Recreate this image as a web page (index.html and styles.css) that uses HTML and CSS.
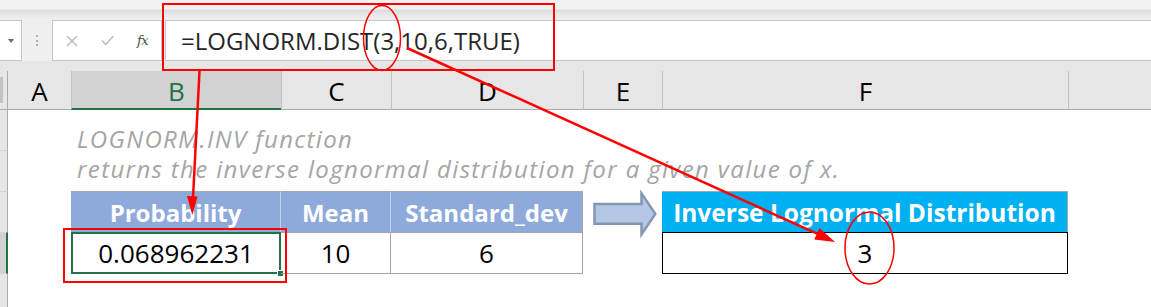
FILE: index.html
```html
<!DOCTYPE html>
<html>
<head>
<meta charset="utf-8">
<title>LOGNORM.DIST</title>
<link rel="stylesheet" href="styles.css">
</head>
<body>
<div class="app">
  <div class="topbar"></div>
  <div class="formulabar">
    <div class="namebox"><span class="caret"></span></div>
    <div class="grip"><i></i><i></i><i></i></div>
    <div class="fxbox">
      <svg class="ico-x" width="12" height="12" viewBox="0 0 12 12"><path d="M1 1L11 11M11 1L1 11" fill="none" stroke="#bdbdbd" stroke-width="1.5"/></svg>
      <svg class="ico-ok" width="13" height="11" viewBox="0 0 13 11"><path d="M1 5.5L4.8 9.5L12.2 1.2" fill="none" stroke="#bdbdbd" stroke-width="1.6"/></svg>
      <span class="fx">fx</span>
    </div>
    <div class="formula">=LOGNORM.DIST(3,10,6,TRUE)</div>
  </div>
  <div class="colheads">
    <div class="corner"><span class="corner-tri"></span></div>
    <div class="ch first">A</div>
    <div class="ch sel">B</div>
    <div class="ch">C</div>
    <div class="ch">D</div>
    <div class="ch">E</div>
    <div class="ch">F</div>
    <div class="ch"></div>
  </div>
  <div class="sheet">
    <div class="rh r1"></div>
    <div class="rh r2"></div>
    <div class="rh r3"></div>
    <div class="rh r4"></div>
    <div class="rh r5"></div>

    <div class="note">LOGNORM.INV function<br>returns the inverse lognormal distribution for a given value of x.</div>

    <div class="th col-b">Probability</div>
    <div class="th col-c">Mean</div>
    <div class="th col-d last">Standard_dev</div>

    <div class="arrowcell">
      <svg width="67" height="47" viewBox="0 0 67 47"><polygon points="2.5,13 49.5,13 49.5,2.3 63.3,22.9 49.5,43.5 49.5,32.8 2.5,32.8" fill="#b4c7e7" stroke="#8497b0" stroke-width="2.5"/></svg>
    </div>

    <div class="th2">Inverse Lognormal Distribution</div>

    <div class="td col-b active">0.068962231<span class="selbox"><i class="handle"></i></span></div>
    <div class="td col-c">10</div>
    <div class="td col-d">6</div>

    <div class="td2">3</div>
  </div>

  <svg class="marks" width="1151" height="307" viewBox="0 0 1151 307">
    <g fill="none" stroke="#ff0000">
      <rect x="163" y="4" width="391" height="66" stroke-width="2"/>
      <ellipse cx="382" cy="38" rx="18.5" ry="32.5" stroke-width="1.5"/>
      <line x1="199.5" y1="71" x2="193" y2="198" stroke-width="2.5"/>
      <line x1="407" y1="48" x2="817" y2="233.7" stroke-width="2.5"/>
      <ellipse cx="869.5" cy="248" rx="24.5" ry="36" stroke-width="1.5"/>
      <rect x="64" y="229" width="222" height="53" stroke-width="2"/>
    </g>
    <g fill="#ff0000">
      <polygon points="192.3,215 187,196 197.6,196.5"/>
      <polygon points="835,242 814.3,239.4 819.4,228"/>
    </g>
  </svg>
</div>
</body>
</html>
```

FILE: styles.css
```css
* { box-sizing: border-box; margin: 0; padding: 0; }
html, body { width: 1151px; height: 307px; overflow: hidden; background: #fff; }
body { font-family: "Open Sans", "Noto Sans", sans-serif; }

.app { position: relative; width: 1151px; height: 307px; }

.topbar {
  height: 20px;
  background: linear-gradient(#f3f2f1 0, #f3f2f1 9px, #dcdcdc 10px, #e9e9e9 15px, #efefef 20px);
}

.formulabar { display: flex; height: 41px; background: #efefef; }
.namebox {
  width: 22px; background: #fff;
  border: 1px solid #c6c6c6; border-left: 0;
  display: flex; align-items: center; justify-content: center; padding-left: 1px;
}
.caret {
  width: 0; height: 0;
  border-left: 3.5px solid transparent; border-right: 3.5px solid transparent;
  border-top: 4px solid #6e6e6e;
}
.grip {
  width: 30px; display: flex; flex-direction: column; align-items: center; justify-content: center; gap: 2.5px;
}
.grip i { display: block; width: 2px; height: 2px; background: #b3b3b3; }
.fxbox {
  width: 110px; background: #fff; border: 1px solid #c6c6c6;
  display: flex; align-items: center; padding-left: 13px; gap: 23px;
}
.fx {
  font-family: "DejaVu Serif", "Liberation Serif", serif; font-style: italic;
  font-size: 13px; color: #4a4a4a; letter-spacing: -0.5px; margin-top: -1px;
}
.formula {
  flex: 1; margin-left: 3px; background: #fff;
  border: 1px solid #c6c6c6; border-right: 0;
  font-size: 24px; line-height: 39px;
  color: #262626; padding-left: 15px; white-space: nowrap;
}

.colheads {
  display: grid;
  grid-template-columns: 8px 63px 210px 110px 192px 79px 406px 1fr;
  padding-top: 10px; height: 49px; background: #e6e6e6;
}
.corner { border-right: 1px solid #ababab; border-bottom: 1px solid #ababab; display: flex; align-items: center; }
.corner-tri { display: block; width: 3px; height: 26px; background: #c3c3c3; }
.ch {
  height: 39px; border-bottom: 1px solid #ababab; border-left: 1px solid #c3c3c3;
  display: flex; align-items: center; justify-content: center; padding-top: 2px;
  font-size: 26px; color: #000;
}
.ch.first { border-left: 0; }
.ch.sel { background: #d2d2d2; color: #217346; border-bottom: 2px solid #217346; padding-top: 3px; }

.sheet {
  display: grid;
  grid-template-columns: 8px 63px 210px 110px 192px 79px 406px 1fr;
  grid-template-rows: 40px 41px 41px 42px 1fr;
  height: 197px;
}
.rh { grid-column: 1; background: #e6e6e6; border-right: 1px solid #ababab; }
.rh.r1 { grid-row: 1; }
.rh.r2 { grid-row: 2; border-top: 1px solid #d4d4d4; }
.rh.r3 { grid-row: 3; border-top: 1px solid #d4d4d4; }
.rh.r4 { grid-row: 4; border-top: 1px solid #d4d4d4; border-bottom: 1px solid #d4d4d4; background: #d2d2d2; border-right: 2px solid #217346; }
.rh.r5 { grid-row: 5; }

.note {
  grid-column: 3 / 9; grid-row: 1 / 3;
  padding: 14px 0 0 6px;
  font-style: italic; font-size: 24px; line-height: 30px; letter-spacing: 1.35px; color: #a5a5a5;
  white-space: nowrap;
}

.th {
  grid-row: 3; background: #8eaadb; color: #fff; font-weight: 700; font-size: 24px;
  display: flex; align-items: center; justify-content: center;
  border-top: 1px solid #a6a6a6; border-right: 1px solid #c3cfe8;
}
.th.last { border-right-color: #a6a6a6; }
.col-b { grid-column: 3; }
.col-c { grid-column: 4; }
.col-d { grid-column: 5; }

.arrowcell { grid-column: 6; grid-row: 3 / 5; padding-left: 9px; }
.arrowcell svg { display: block; overflow: visible; }

.th2 {
  grid-column: 7; grid-row: 3; background: #00b0f0; color: #fff; font-weight: 700; font-size: 24.5px;
  display: flex; align-items: center; justify-content: center; white-space: nowrap;
  border-top: 1px solid #a6a6a6; border-right: 1px solid #a6a6a6;
}

.td {
  grid-row: 4; position: relative;
  display: flex; align-items: center; justify-content: center;
  font-size: 26px; color: #000;
  border-top: 1px solid #a6a6a6; border-bottom: 1px solid #a6a6a6; border-right: 1px solid #a6a6a6;
}
.td.active { border-left: 1px solid #a6a6a6; }
.selbox { position: absolute; inset: -1px; border: 2px solid #217346; }
.handle {
  position: absolute; right: -5px; bottom: -5px; width: 7px; height: 7px;
  background: #217346; border: 1px solid #fff;
}

.td2 {
  grid-column: 7; grid-row: 4;
  display: flex; align-items: center; justify-content: center;
  font-size: 26px; color: #000; border: 1px solid #000;
}

.marks { position: absolute; left: 0; top: 0; pointer-events: none; }
```
